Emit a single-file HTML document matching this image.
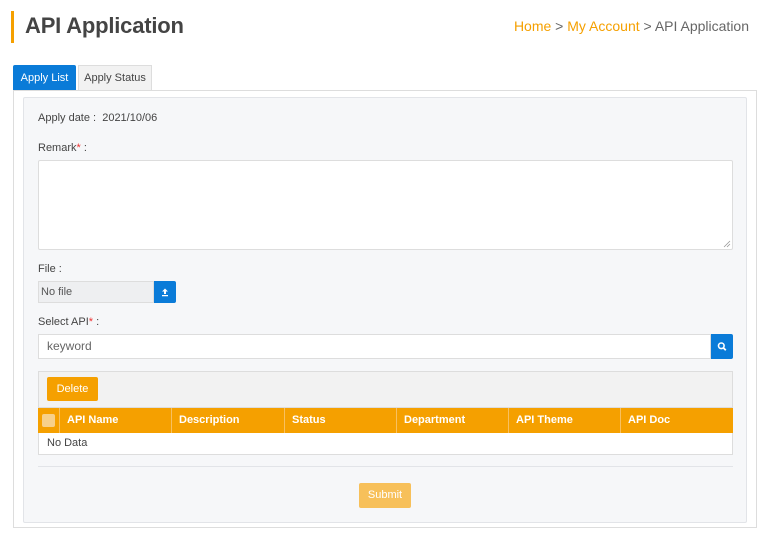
<!DOCTYPE html>
<html><head><meta charset="utf-8"><style>
*{box-sizing:border-box;margin:0;padding:0}
body{width:768px;height:538px;background:#fff;font-family:"Liberation Sans",sans-serif;position:relative;overflow:hidden;color:#444}
.a{position:absolute}
.lbl{font-size:11px;color:#444}
.req{color:#e33}
</style></head><body>
<div class="a" style="left:11px;top:11px;width:3px;height:32px;background:#f5a000"></div>
<div class="a" style="left:25px;top:13px;font-size:22px;font-weight:bold;color:#444;letter-spacing:-0.2px">API Application</div>
<div class="a" style="right:19px;top:18px;font-size:14px;color:#666"><span style="color:#f5a000">Home</span> &gt; <span style="color:#f5a000">My Account</span> &gt; API Application</div>

<div class="a" style="left:13px;top:65px;width:63px;height:26px;background:#0a7bd8;color:#fff;font-size:11px;text-align:center;line-height:26px;border-radius:2px 2px 0 0">Apply List</div>
<div class="a" style="left:78px;top:65px;width:74px;height:26px;background:#f2f2f2;border:1px solid #ddd;border-bottom:none;color:#444;font-size:11px;text-align:center;line-height:25px">Apply Status</div>

<div class="a" style="left:13px;top:90px;width:744px;height:438px;border:1px solid #ddd;background:#fff"></div>
<div class="a" style="left:23px;top:97px;width:724px;height:426px;border:1px solid #e2e4e8;background:#f6f7f9;border-radius:2px"></div>

<div class="a lbl" style="left:38px;top:112px">Apply date :&nbsp; 2021/10/06</div>
<div class="a lbl" style="left:38px;top:142px">Remark<span class="req">*</span> :</div>
<div class="a" style="left:38px;top:160px;width:695px;height:90px;background:#fff;border:1px solid #ddd;border-radius:2px">
<svg class="a" style="right:1px;bottom:1px" width="8" height="8" viewBox="0 0 8 8"><path d="M1 7L7 1M4 7L7 4" stroke="#999" stroke-width="0.8"/></svg></div>
<div class="a lbl" style="left:38px;top:263px">File :</div>
<div class="a" style="left:38px;top:281px;width:116px;height:22px;background:#eeeff1;border:1px solid #ddd;font-size:11px;color:#555;line-height:20px;padding-left:2px">No file</div>
<div class="a" style="left:154px;top:281px;width:22px;height:22px;background:#0a7bd8;border-radius:0 2px 2px 0">
<svg width="22" height="22" viewBox="0 0 22 22"><path d="M11 7.5l3 3h-2v2.5h-2v-2.5h-2z M8 14h6v1.2h-6z" fill="#fff"/></svg></div>
<div class="a lbl" style="left:38px;top:316px">Select API<span class="req">*</span> :</div>
<div class="a" style="left:38px;top:334px;width:673px;height:25px;background:#fff;border:1px solid #ddd;font-size:12px;color:#666;line-height:23px;padding-left:8px">keyword</div>
<div class="a" style="left:711px;top:334px;width:22px;height:25px;background:#0a7bd8;border-radius:0 2px 2px 0">
<svg width="22" height="25" viewBox="0 0 22 25"><circle cx="10.3" cy="11.8" r="2.8" fill="none" stroke="#fff" stroke-width="1.6"/><path d="M12.3 13.8l2.5 2.5" stroke="#fff" stroke-width="1.8"/></svg></div>

<div class="a" style="left:38px;top:371px;width:695px;height:84px;border:1px solid #ddd;background:#fff"></div>
<div class="a" style="left:39px;top:372px;width:693px;height:36px;background:#f2f2f2;border-bottom:1px solid #ddd"></div>
<div class="a" style="left:47px;top:377px;width:51px;height:24px;background:#f5a000;border-radius:2px;color:#fff;font-size:11px;text-align:center;line-height:24px">Delete</div>
<div class="a" style="left:38px;top:408px;width:695px;height:25px;background:#f5a000;color:#fff;font-size:11px;font-weight:bold;line-height:25px">
<div class="a" style="left:4px;top:6px;width:13px;height:13px;background:#f7d08a;border-radius:2px"></div>
<div class="a" style="left:21px;top:0;width:1px;height:25px;background:#f8c060"></div>
<div class="a" style="left:29px">API Name</div>
<div class="a" style="left:133px;top:0;width:1px;height:25px;background:#f8c060"></div>
<div class="a" style="left:141px">Description</div>
<div class="a" style="left:246px;top:0;width:1px;height:25px;background:#f8c060"></div>
<div class="a" style="left:254px">Status</div>
<div class="a" style="left:358px;top:0;width:1px;height:25px;background:#f8c060"></div>
<div class="a" style="left:366px">Department</div>
<div class="a" style="left:470px;top:0;width:1px;height:25px;background:#f8c060"></div>
<div class="a" style="left:478px">API Theme</div>
<div class="a" style="left:582px;top:0;width:1px;height:25px;background:#f8c060"></div>
<div class="a" style="left:590px">API Doc</div>
</div>
<div class="a" style="left:47px;top:437px;font-size:11px;color:#444">No Data</div>
<div class="a" style="left:38px;top:466px;width:695px;height:1px;background:#e2e4e8"></div>
<div class="a" style="left:359px;top:483px;width:52px;height:25px;background:#f7c05a;border-radius:2px;color:#fff;font-size:11px;text-align:center;line-height:25px">Submit</div>
</body></html>
